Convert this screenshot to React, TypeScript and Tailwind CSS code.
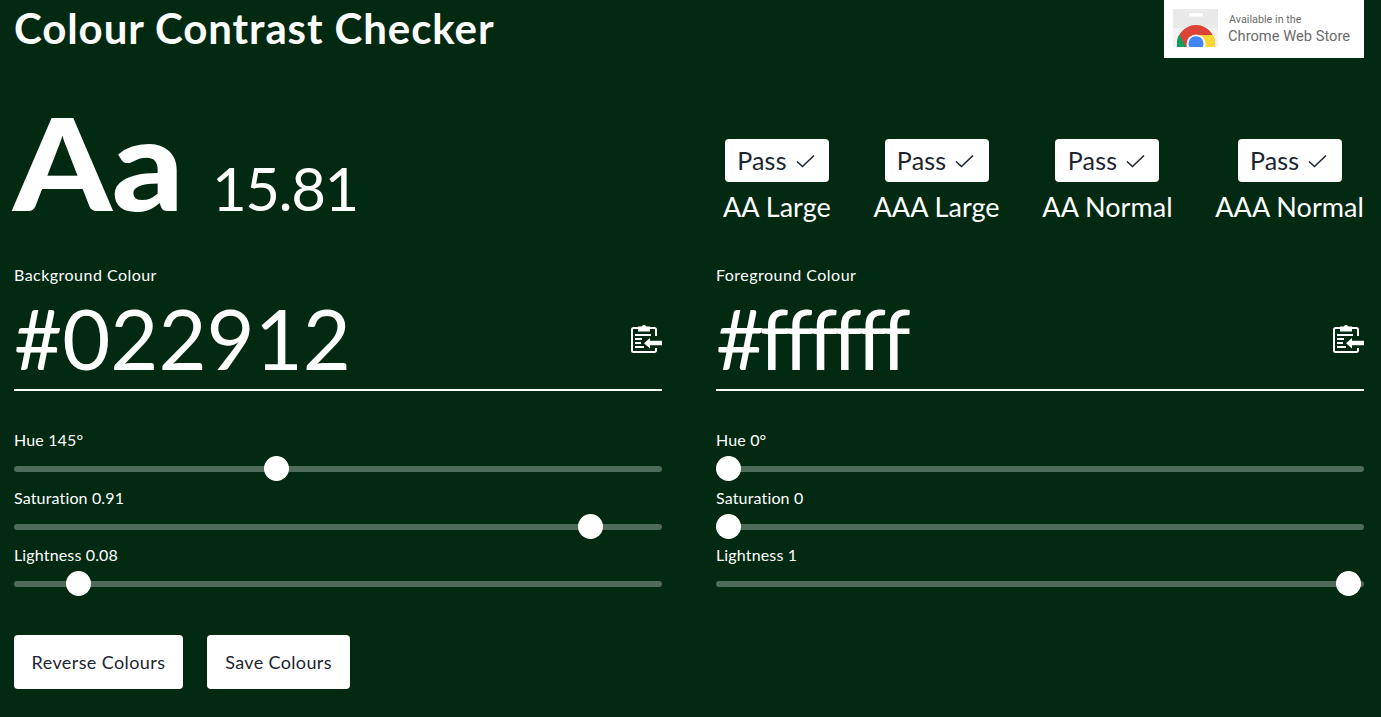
const font = "font-['Lato','Noto_Sans',sans-serif]";

interface SliderProps {
    label: string;
    value: number;
    max: number;
}

// thumb travel is 28px shorter than the track, it stops a bit before the right end
function Slider({ label, value, max }: SliderProps) {
    const pct = value / max;
    return (
        <div className="h-[57.5px]">
            <div className="h-[22px] text-[16px] leading-[22px] tracking-[0.15px] text-white">{label}</div>
            <div className="relative mt-[5px] h-[25px]">
                <div className="absolute left-0 right-0 top-[10px] h-[6px] rounded-full bg-[#4e6b5b]" />
                <div
                    className="absolute top-0 h-[25px] w-[25px] rounded-full bg-white"
                    style={{ left: `calc((100% - 28px) * ${pct})` }}
                />
            </div>
        </div>
    );
}

function PasteIcon() {
    return (
        <svg width="31" height="31" viewBox="0 0 31 31" className="shrink-0">
            <path
                d="M8 5H2.500A1.500 1.500 0 0 0 1 6.500v21A1.500 1.500 0 0 0 2.500 29h21a1.500 1.500 0 0 0 1.500-1.500V25M25 13V6.500A1.500 1.500 0 0 0 23.500 5H18"
                fill="none"
                stroke="#fff"
                strokeWidth="2"
            />
            <path d="M7 3.500h3.500a2.800 2.800 0 0 1 5 0H19V8.500H7z" fill="#fff" />
            <path d="M4 11h16v2H4zM4 15h7v2H4zM4 19h6v2H4zM4 23h9v2H4z" fill="#fff" />
            <path d="M31 17.800H19V15l-6 5.200 6 5.300v-3.200h12z" fill="#fff" />
        </svg>
    );
}

function ColourField({ label, value, tight }: { label: string; value: string; tight?: boolean }) {
    return (
        <div>
            <div className="h-[22px] text-[16px] leading-[22px] tracking-[0.47px] text-white">{label}</div>
            <div className="mt-[1px] flex h-[104px] items-center justify-between border-b-2 border-white">
                <span className="text-[83px] leading-none text-white [font-variant-ligatures:none]">
                    {tight ? <span className="tracking-[-4.700px]">{value}</span> : value}
                </span>
                <div className="mt-[1px]">
                    <PasteIcon />
                </div>
            </div>
        </div>
    );
}

function PassBadge({ label }: { label: string }) {
    return (
        <div className="flex flex-col items-center">
            <div className="flex h-[43px] w-[104px] items-center justify-center gap-[9px] rounded-[4px] bg-white pr-[2px] text-[25px] tracking-[0.2px] text-[#1c2430]">
                <span>Pass</span>
                <svg width="19" height="14" viewBox="0 0 19 14" fill="none" stroke="#1c2430" strokeWidth="1.600">
                    <path d="M1 7.500 6.500 12.500 18 1.500" />
                </svg>
            </div>
            <div className="mt-[7px] text-[27px] leading-[36px] tracking-[0.05px] text-white">{label}</div>
        </div>
    );
}

function ChromeBadge() {
    return (
        <div className="flex h-[58px] w-[200px] items-center bg-white pl-[9px]">
            <svg width="45" height="39" viewBox="0 0 45 39" className="mb-[1px] shrink-0">
                <rect x="0" y="0" width="45" height="38" fill="#e9e9e9" />
                <rect x="0" y="19" width="45" height="19" fill="#f2f2f2" />
                <rect x="16" y="4" width="14" height="3.500" rx="1.500" fill="#fff" />
                <path d="M4 38V35a19 19 0 0 1 38 0v3z" fill="#db4437" />
                <path d="M4 38V33.500c0-3 1-6 2.500-8L13 38z" fill="#0f9d58" />
                <path d="M23 26h17c1.500 2.500 2 5.500 2 9v3H31z" fill="#fdd835" />
                <circle cx="23" cy="35" r="9.500" fill="#fff" />
                <path d="M16.300 38a7.500 7.500 0 1 1 13.400 0z" fill="#4285f4" />
            </svg>
            <div className="mb-[1px] ml-[11px] font-['Roboto',sans-serif] text-[#6b6b6b]">
                <div className="text-[10.800px] leading-[14px]">Available in the</div>
                <div className="-ml-[1px] text-[14.700px] leading-[18px]">Chrome Web Store</div>
            </div>
        </div>
    );
}

export default function App() {
    return (
        <div className={`${font} h-[717px] overflow-hidden bg-[#022912] pl-[14px] pr-[17px]`}>
            <header className="flex items-start justify-between">
                <h1 className="pt-[2px] text-[42px] font-bold leading-[52px] tracking-[0.9px] text-white">Colour Contrast Checker</h1>
                <ChromeBadge />
            </header>

            <div className="mt-[41px] flex h-[126px] items-start justify-between">
                <div className="flex items-baseline">
                    <span className="-ml-[1px] inline-block w-[171px] origin-left scale-x-[1.1] text-[128px] font-black leading-[125px] text-white">Aa</span>
                    <span className="ml-[28px] text-[60px] leading-[68px] tracking-[-1.500px] text-white">15.81</span>
                </div>
                <div className="mt-[40px] flex w-[641px] justify-between">
                    <PassBadge label="AA Large" />
                    <PassBadge label="AAA Large" />
                    <PassBadge label="AA Normal" />
                    <PassBadge label="AAA Normal" />
                </div>
            </div>

            <div className="mt-[39px] grid grid-cols-2 gap-x-[54px]">
                <div>
                    <ColourField label="Background Colour" value="#022912" />
                    <div className="mt-[38px]">
                        <Slider label="Hue 145°" value={145} max={360} />
                        <Slider label="Saturation 0.91" value={0.91} max={1} />
                        <Slider label="Lightness 0.08" value={0.084} max={1} />
                    </div>
                </div>
                <div>
                    <ColourField label="Foreground Colour" value="#ffffff" tight />
                    <div className="mt-[38px]">
                        <Slider label="Hue 0°" value={0} max={360} />
                        <Slider label="Saturation 0" value={0} max={1} />
                        <Slider label="Lightness 1" value={1} max={1} />
                    </div>
                </div>
            </div>

            <div className="mt-[33.500px] flex gap-[24px]">
                <button className="h-[54px] w-[169px] rounded-[4px] bg-white text-[18px] tracking-[0.4px] text-[#1c2430]">Reverse Colours</button>
                <button className="h-[54px] w-[143px] rounded-[4px] bg-white text-[18px] tracking-[0.35px] text-[#1c2430]">Save Colours</button>
            </div>
        </div>
    );
}
